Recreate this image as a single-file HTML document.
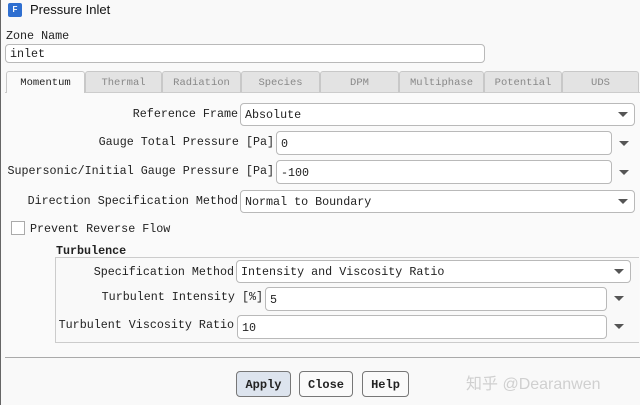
<!DOCTYPE html>
<html><head><meta charset="utf-8"><style>
*{box-sizing:border-box;margin:0;padding:0}
body{width:640px;height:405px;background:#f9f9f9;position:relative;overflow:hidden;font-family:"Liberation Mono","Noto Serif CJK SC",monospace;font-size:11.7px;color:#222}
.a{position:absolute;white-space:nowrap}
.box{position:absolute;background:#fff;border:1px solid #b9b9b9;border-radius:4px;padding-left:4px;line-height:23px}
.arr{position:absolute;width:0;height:0;border-left:5px solid transparent;border-right:5px solid transparent;border-top:5px solid #555}
.tab{position:absolute;top:71px;height:21px;background:#e3e3e3;border:1px solid #c8c8c8;border-bottom:none;border-radius:3px 3px 0 0;text-align:center;line-height:22px;color:#888;font-size:10.5px}
.lbl{position:absolute;text-align:right;white-space:nowrap}
.btn{position:absolute;top:371px;height:26px;border:1px solid #777;border-radius:4px;background:#fafafa;font-weight:bold;line-height:26px;text-align:center;font-size:12px}
</style></head><body>
<div class="a" style="left:0;top:0;width:1px;height:405px;background:#666"></div>
<div class="a" style="left:8px;top:3px;width:14px;height:14px;background:#2f6fd0;border-radius:2px;color:#fff;font:bold 8px 'Liberation Sans';text-align:center;line-height:14px">F</div>
<div class="a" style="left:30px;top:2px;font:13px 'Liberation Sans',sans-serif;color:#111">Pressure Inlet</div>
<div class="a" style="left:6px;top:29px">Zone Name</div>
<div class="box" style="left:5px;top:44px;width:480px;height:19px;line-height:19px">inlet</div>
<div class="a" style="left:5px;top:92px;width:635px;height:265px;border-top:1px solid #ccc;background:#fafafa"></div>
<div class="tab" style="left:6px;width:79px;background:#fafafa;color:#222;height:22px">Momentum</div>
<div class="tab" style="left:85px;width:77px">Thermal</div>
<div class="tab" style="left:162px;width:79px">Radiation</div>
<div class="tab" style="left:241px;width:79px">Species</div>
<div class="tab" style="left:320px;width:79px">DPM</div>
<div class="tab" style="left:399px;width:85px">Multiphase</div>
<div class="tab" style="left:484px;width:78px">Potential</div>
<div class="tab" style="left:562px;width:77px">UDS</div>

<div class="lbl" style="right:402px;top:107px">Reference Frame</div>
<div class="box" style="left:240px;top:103px;width:395px;height:23px">Absolute</div><div class="arr" style="left:618px;top:112px"></div>
<div class="lbl" style="right:366px;top:135px">Gauge Total Pressure [Pa]</div>
<div class="box" style="left:276px;top:131px;width:336px;height:24px;line-height:25px">0</div><div class="arr" style="left:619px;top:141px"></div>
<div class="lbl" style="right:366px;top:164px">Supersonic/Initial Gauge Pressure [Pa]</div>
<div class="box" style="left:276px;top:160px;width:336px;height:24px;line-height:25px">-100</div><div class="arr" style="left:619px;top:170px"></div>
<div class="lbl" style="right:402px;top:194px">Direction Specification Method</div>
<div class="box" style="left:240px;top:190px;width:395px;height:23px">Normal to Boundary</div><div class="arr" style="left:618px;top:199px"></div>

<div class="a" style="left:11px;top:221px;width:14px;height:14px;border:1px solid #aaa;background:#fff"></div>
<div class="a" style="left:30px;top:222px">Prevent Reverse Flow</div>
<div class="a" style="left:56px;top:244px;font-weight:bold">Turbulence</div>
<div class="a" style="left:55px;top:257px;width:584px;height:86px;border:1px solid #ccc;border-right:none;background:#f9f9f9"></div>
<div class="lbl" style="right:406px;top:265px">Specification Method</div>
<div class="box" style="left:236px;top:260px;width:395px;height:23px">Intensity and Viscosity Ratio</div><div class="arr" style="left:614px;top:269px"></div>
<div class="lbl" style="right:377px;top:290px">Turbulent Intensity [%]</div>
<div class="box" style="left:265px;top:287px;width:342px;height:24px;line-height:25px">5</div><div class="arr" style="left:614px;top:296px"></div>
<div class="lbl" style="right:406px;top:318px">Turbulent Viscosity Ratio</div>
<div class="box" style="left:237px;top:315px;width:370px;height:24px;line-height:25px">10</div><div class="arr" style="left:614px;top:324px"></div>

<div class="a" style="left:5px;top:357px;width:635px;height:1px;background:#aaa"></div>
<div class="btn" style="left:236px;width:55px;background:#dde4ee">Apply</div>
<div class="btn" style="left:299px;width:54px">Close</div>
<div class="btn" style="left:362px;width:47px">Help</div>
<div class="a" style="left:466px;top:370px;font:16px 'Liberation Sans','Noto Sans CJK SC',sans-serif;color:#d0d0d0">知乎 @Dearanwen</div>
</body></html>
